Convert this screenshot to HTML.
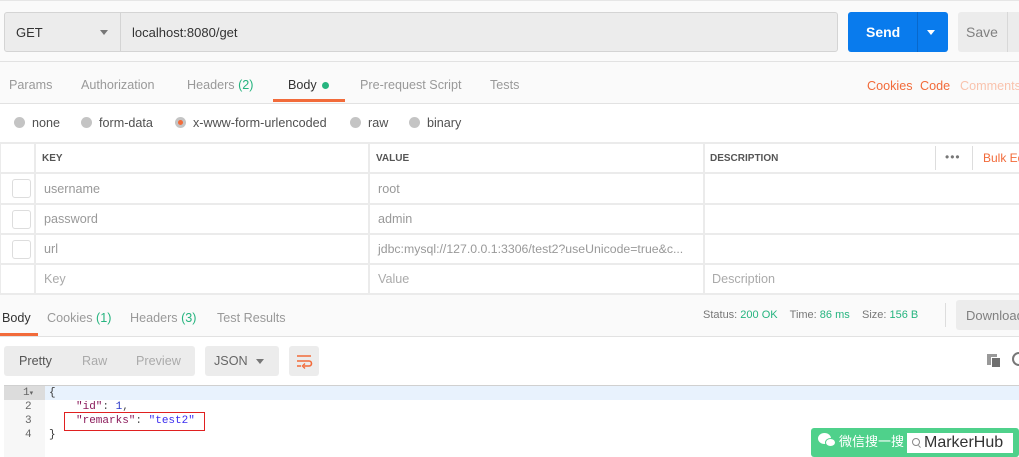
<!DOCTYPE html>
<html><head><meta charset="utf-8"><style>
*{margin:0;padding:0;box-sizing:border-box}
body{width:1019px;height:457px;overflow:hidden;background:#fff;font-family:"Liberation Sans",sans-serif;font-size:12px;color:#505050;position:relative}
.a{position:absolute;white-space:nowrap}
.g{color:#26b47f}
.o{color:#f26b3a}
.hl{background:#ebebeb}
.vl{position:absolute;width:2px;background:#ebebeb}
.ph{color:#aaa}
.cb{position:absolute;left:12px;width:19px;height:19px;border:1px solid #ddd;border-radius:3px;background:#fff}
.rd{position:absolute;width:11px;height:11px;border-radius:50%;background:#c4c4c4;top:117px}
.mono{font-family:"Liberation Mono",monospace;font-size:11px}
.tb{font-size:12.6px}
</style></head><body>
<div class="a" style="left:0;top:0;width:1019px;height:62px;background:#fafafa;border-top:1px solid #e6e6e6;border-bottom:1px solid #e2e2e2"></div>
<div class="a" style="left:4px;top:12px;width:834px;height:40px;background:#ececec;border:1px solid #d4d4d4;border-radius:3px"></div>
<div class="a" style="left:120px;top:12px;width:1px;height:40px;background:#d4d4d4"></div>
<div class="a" style="left:16px;top:25px;font-size:13px;color:#333">GET</div>
<div class="a" style="left:100px;top:30px;border-left:4px solid transparent;border-right:4px solid transparent;border-top:5px solid #777"></div>
<div class="a" style="left:132px;top:25px;font-size:13px;color:#333">localhost:8080/get</div>
<div class="a" style="left:848px;top:12px;width:100px;height:40px;background:#097bed;border-radius:3px"></div>
<div class="a" style="left:917px;top:12px;width:1px;height:40px;background:#0868cc"></div>
<div class="a" style="left:866px;top:24px;font-size:14px;font-weight:bold;color:#fff">Send</div>
<div class="a" style="left:927px;top:30px;border-left:4px solid transparent;border-right:4px solid transparent;border-top:5px solid #fff"></div>
<div class="a" style="left:958px;top:12px;width:70px;height:40px;background:#ececec;border-radius:3px"></div>
<div class="a" style="left:1007px;top:12px;width:1px;height:40px;background:#d8d8d8"></div>
<div class="a" style="left:966px;top:24px;font-size:14px;color:#808080">Save</div>

<div class="a" style="left:0;top:62px;width:1019px;height:42px;background:#fafafa;border-bottom:1px solid #e2e2e2"></div>
<div class="a tb" style="left:9px;top:78px;color:#999">Params</div>
<div class="a tb" style="left:81px;top:78px;color:#999">Authorization</div>
<div class="a tb" style="left:187px;top:78px;color:#999">Headers <span class="g">(2)</span></div>
<div class="a tb" style="left:288px;top:78px;color:#333">Body</div>
<div class="a" style="left:322px;top:82px;width:7px;height:7px;border-radius:50%;background:#26b47f"></div>
<div class="a" style="left:273px;top:99px;width:72px;height:3px;background:#f26b3a"></div>
<div class="a tb" style="left:360px;top:78px;color:#999">Pre-request Script</div>
<div class="a tb" style="left:490px;top:78px;color:#999">Tests</div>
<div class="a o tb" style="left:867px;top:79px">Cookies</div>
<div class="a o tb" style="left:920px;top:79px">Code</div>
<div class="a tb" style="left:960px;top:79px;color:#f9c3ad">Comments</div>

<div class="rd" style="left:14px"></div><div class="a tb" style="left:32px;top:116px">none</div>
<div class="rd" style="left:81px"></div><div class="a tb" style="left:99px;top:116px">form-data</div>
<div class="rd" style="left:175px"></div><div class="a" style="left:178px;top:120px;width:5px;height:5px;border-radius:50%;background:#f26b3a"></div><div class="a tb" style="left:193px;top:116px">x-www-form-urlencoded</div>
<div class="rd" style="left:350px"></div><div class="a tb" style="left:368px;top:116px">raw</div>
<div class="rd" style="left:409px"></div><div class="a tb" style="left:427px;top:116px">binary</div>

<div class="a hl" style="left:0;top:142px;width:1019px;height:2px"></div>
<div class="a hl" style="left:0;top:172px;width:1019px;height:2px"></div>
<div class="a hl" style="left:0;top:203px;width:1019px;height:2px"></div>
<div class="a hl" style="left:0;top:233px;width:1019px;height:2px"></div>
<div class="a hl" style="left:0;top:263px;width:1019px;height:2px"></div>
<div class="a hl" style="left:0;top:293px;width:1019px;height:2px"></div>
<div class="vl" style="left:0;top:142px;height:153px;width:1px"></div>
<div class="vl" style="left:34px;top:142px;height:153px"></div>
<div class="vl" style="left:368px;top:142px;height:153px"></div>
<div class="vl" style="left:703px;top:142px;height:153px"></div>
<div class="vl" style="left:935px;top:146px;height:24px;width:1px;background:#ddd"></div>
<div class="vl" style="left:972px;top:146px;height:24px;width:1px;background:#ddd"></div>
<div class="a" style="left:42px;top:153px;font-size:10px;font-weight:bold;color:#555">KEY</div>
<div class="a" style="left:376px;top:153px;font-size:10px;font-weight:bold;color:#555">VALUE</div>
<div class="a" style="left:710px;top:153px;font-size:10px;font-weight:bold;color:#555">DESCRIPTION</div>
<div class="a" style="left:945px;top:150px;font-size:12px;color:#777;letter-spacing:1px">•••</div>
<div class="a o" style="left:983px;top:151px;font-size:12px">Bulk Edit</div>
<div class="cb" style="top:179px"></div><div class="cb" style="top:210px"></div><div class="cb" style="top:240px"></div>
<div class="a tb" style="left:44px;top:182px;color:#999">username</div>
<div class="a tb" style="left:378px;top:182px;color:#999">root</div>
<div class="a tb" style="left:44px;top:212px;color:#999">password</div>
<div class="a tb" style="left:378px;top:212px;color:#999">admin</div>
<div class="a tb" style="left:44px;top:242px;color:#999">url</div>
<div class="a tb" style="left:378px;top:242px;color:#999;font-size:12.3px">jdbc:mysql://127.0.0.1:3306/test2?useUnicode=true&amp;c...</div>
<div class="a ph tb" style="left:44px;top:272px">Key</div>
<div class="a ph tb" style="left:378px;top:272px">Value</div>
<div class="a ph tb" style="left:712px;top:272px">Description</div>

<div class="a" style="left:0;top:295px;width:1019px;height:42px;background:#fafafa;border-bottom:1px solid #e2e2e2"></div>
<div class="a tb" style="left:2px;top:311px;color:#333">Body</div>
<div class="a" style="left:0;top:333px;width:38px;height:3px;background:#f26b3a"></div>
<div class="a tb" style="left:47px;top:311px;color:#999">Cookies <span class="g">(1)</span></div>
<div class="a tb" style="left:130px;top:311px;color:#999">Headers <span class="g">(3)</span></div>
<div class="a tb" style="left:217px;top:311px;color:#999">Test Results</div>
<div class="a" style="left:703px;top:309px;font-size:11px;color:#777">Status: <span class="g">200 OK</span>&nbsp;&nbsp;&nbsp; Time: <span class="g">86 ms</span>&nbsp;&nbsp;&nbsp; Size: <span class="g">156 B</span></div>
<div class="a" style="left:945px;top:303px;width:1px;height:24px;background:#ddd"></div>
<div class="a" style="left:956px;top:300px;width:70px;height:30px;background:#ececec;border-radius:3px"></div>
<div class="a" style="left:966px;top:308px;font-size:13px;color:#808080">Download</div>

<div class="a" style="left:4px;top:346px;width:191px;height:30px;background:#ececec;border-radius:3px"></div>
<div class="a tb" style="left:19px;top:354px;color:#555">Pretty</div>
<div class="a tb" style="left:82px;top:354px;color:#aaa">Raw</div>
<div class="a tb" style="left:136px;top:354px;color:#aaa">Preview</div>
<div class="a" style="left:205px;top:346px;width:74px;height:30px;background:#ececec;border-radius:3px"></div>
<div class="a tb" style="left:214px;top:354px;color:#666">JSON</div>
<div class="a" style="left:256px;top:359px;border-left:4px solid transparent;border-right:4px solid transparent;border-top:5px solid #777"></div>
<div class="a" style="left:289px;top:346px;width:30px;height:30px;background:#ececec;border-radius:3px"></div>
<svg class="a" style="left:294px;top:351px" width="20" height="20" viewBox="0 0 20 20"><path d="M3 5h14M3 10h12a2.5 2.5 0 0 1 0 5h-5M3 15h4" stroke="#f26b3a" stroke-width="1.6" fill="none"/><path d="M11 12.5l-2.5 2.5 2.5 2.5" stroke="#f26b3a" stroke-width="1.4" fill="none"/></svg>
<div class="a" style="left:987px;top:354px;width:10px;height:11px;background:#999"></div>
<div class="a" style="left:991px;top:357px;width:10px;height:11px;background:#6f6f6f;border:1px solid #fff"></div>
<div class="a" style="left:1012px;top:352px;width:14px;height:14px;border:2px solid #777;border-radius:50%"></div>

<div class="a" style="left:4px;top:385px;width:1015px;height:1px;background:#d0d0d0"></div>
<div class="a" style="left:4px;top:386px;width:41px;height:71px;background:#f7f7f7"></div>
<div class="a" style="left:45px;top:386px;width:974px;height:14px;background:#e8f2fd"></div>
<div class="a" style="left:4px;top:386px;width:41px;height:14px;background:#dcdcdc"></div>
<div class="a mono" style="left:23px;top:387px;color:#666">1<span style="font-size:7px">▾</span></div>
<div class="a mono" style="left:25px;top:401px;color:#666">2</div>
<div class="a mono" style="left:25px;top:415px;color:#666">3</div>
<div class="a mono" style="left:25px;top:429px;color:#666">4</div>
<div class="a mono" style="left:49px;top:387px;color:#333">{</div>
<div class="a mono" style="left:76px;top:401px"><span style="color:#8b1a5a">"id"</span>: <span style="color:#2a38c8">1</span>,</div>
<div class="a mono" style="left:76px;top:415px"><span style="color:#8b1a5a">"remarks"</span>: <span style="color:#3b2df0">"test2"</span></div>
<div class="a mono" style="left:49px;top:429px;color:#333">}</div>
<div class="a" style="left:64px;top:412px;width:141px;height:19px;border:1px solid #e02020"></div>

<div class="a" style="left:811px;top:428px;width:208px;height:29px;background:#4fd18b;border-radius:3px"></div>
<div class="a" style="left:818px;top:433px;width:13px;height:11px;background:#fff;border-radius:50%"></div>
<div class="a" style="left:825px;top:438px;width:11px;height:9px;background:#fff;border-radius:50%;border:1px solid #4fd18b"></div>
<div class="a" style="left:839px;top:434px;font-size:13px;line-height:16px;color:#fff;font-family:'Liberation Sans','Noto Sans CJK SC',sans-serif">微信搜一搜</div>
<div class="a" style="left:907px;top:433px;width:106px;height:20px;background:#fff"></div>
<div class="a" style="left:912px;top:438px;width:8px;height:8px;border:1px solid #888;border-radius:50%"></div>
<div class="a" style="left:918px;top:446px;width:3px;height:1px;background:#888;transform:rotate(45deg)"></div>
<div class="a" style="left:924px;top:434px;font-size:16px;line-height:18px;color:#333">MarkerHub</div>
</body></html>
